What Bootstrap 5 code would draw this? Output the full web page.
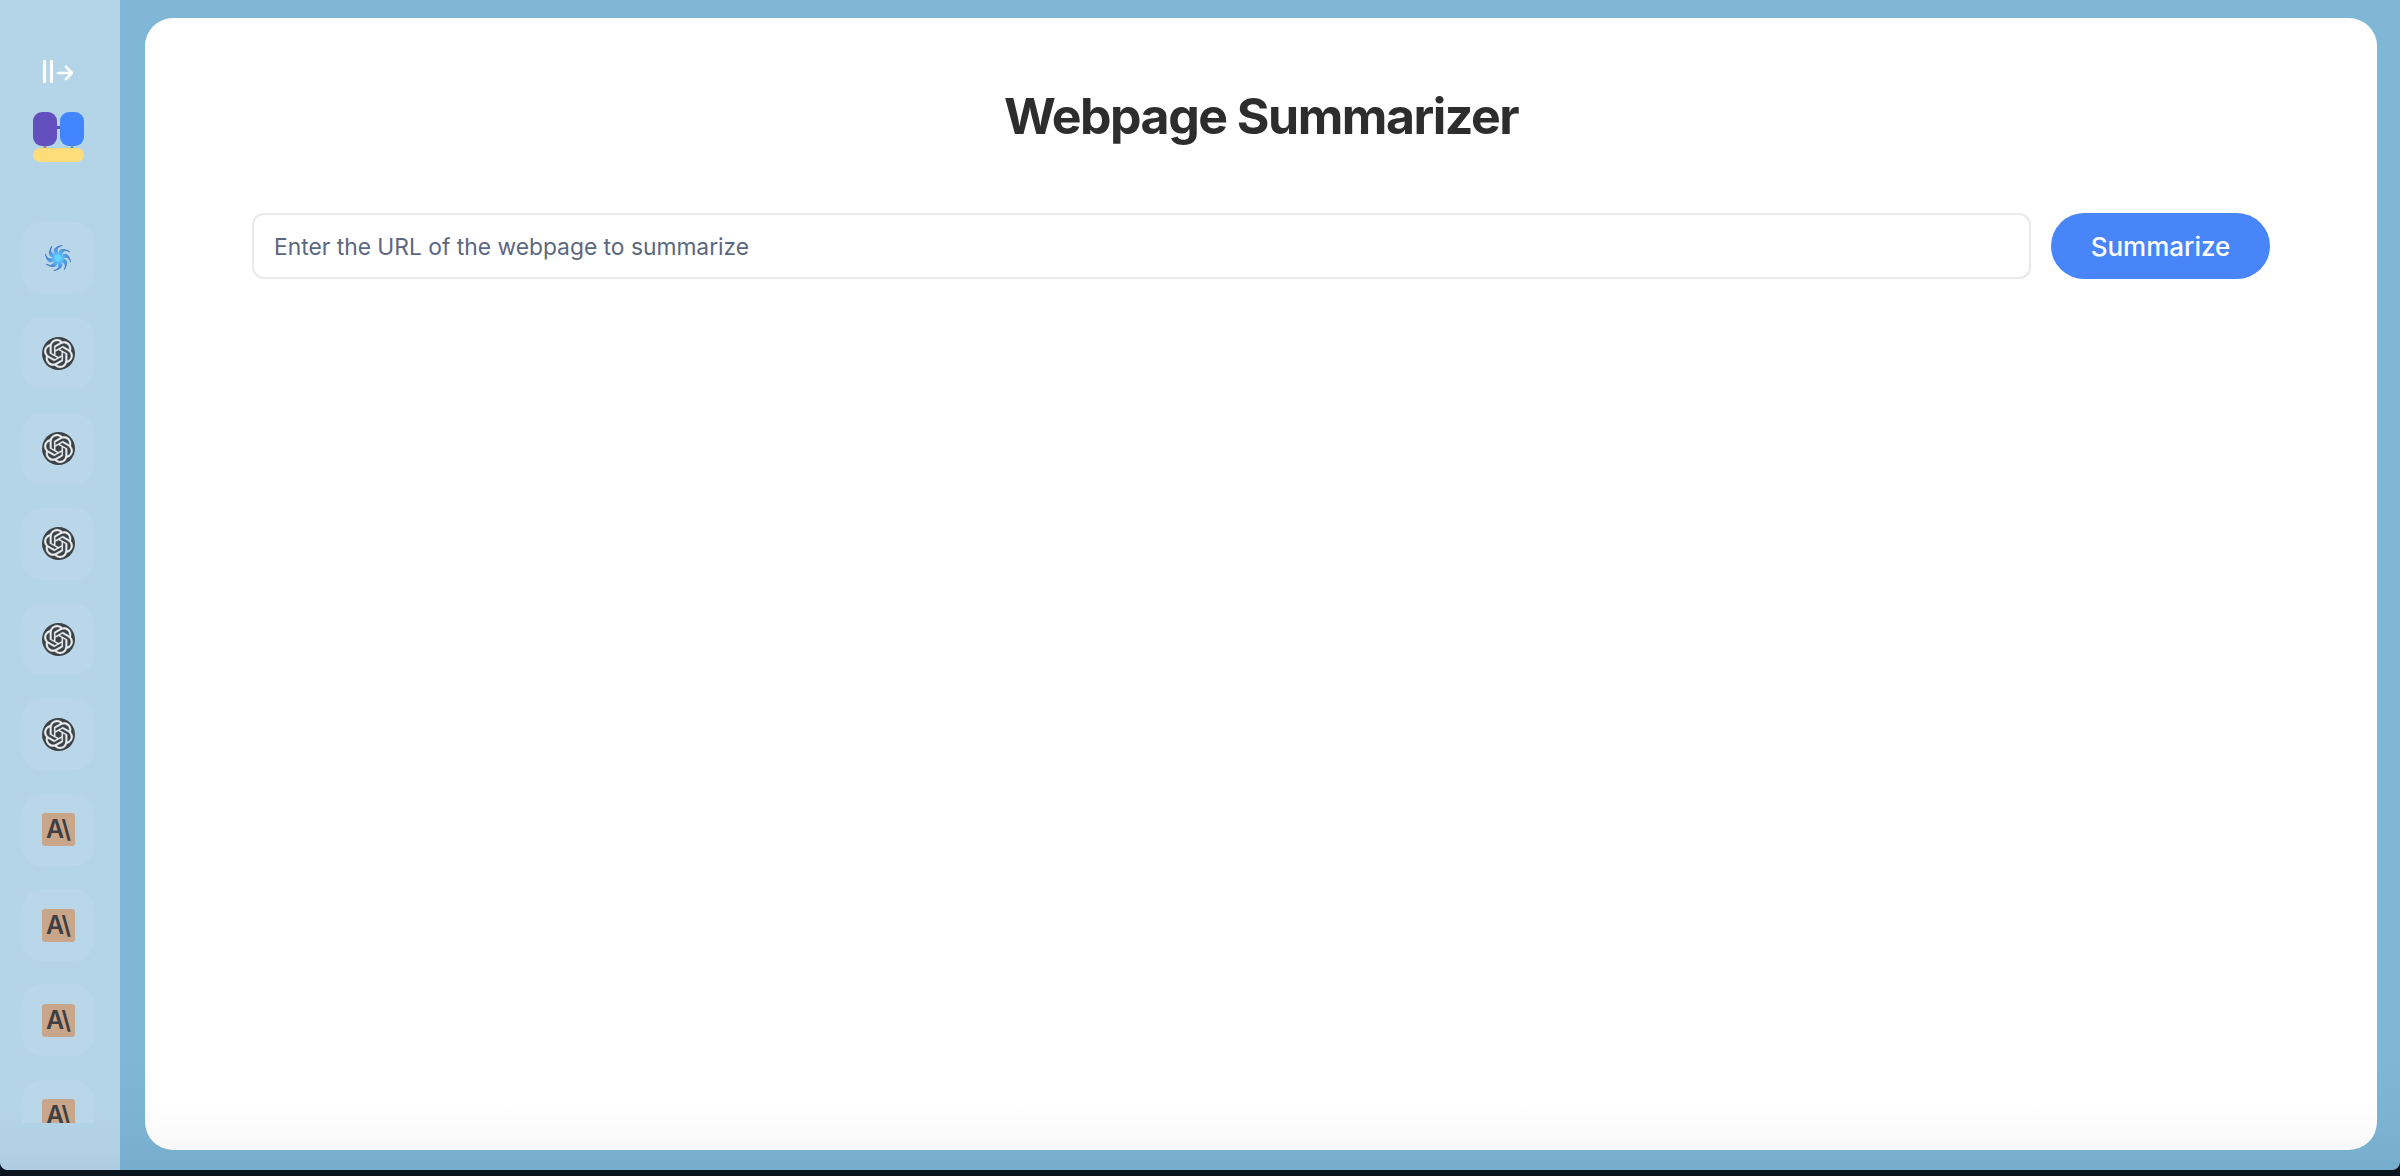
<!DOCTYPE html>
<html lang="en">
<head>
  <meta charset="UTF-8">
  <title>Webpage Summarizer</title>
  <link href="https://cdn.jsdelivr.net/npm/bootstrap@5.3.3/dist/css/bootstrap.min.css" rel="stylesheet">
  <style>
    html, body {
      height: 100%;
    }

    body {
      margin: 0;
      overflow: hidden;
      background: #0b1520;
      font-family: "Inter", "Liberation Sans", sans-serif;
    }

    .app-frame {
      height: 1170px;
      border-radius: 0 0 8px 8px;
      overflow: hidden;
      background: linear-gradient(180deg, #80b7d7 0, #80b7d7 1060px, #78aecd 1170px);
    }

    .side-rail {
      width: 120px;
      height: 100%;
      padding-left: 22px;
      background: linear-gradient(180deg, #b4d4e7 0, #b4d4e7 1110px, #aecde0 1170px);
    }

    .rail-toggle {
      width: 72px;
      height: 23px;
      margin-top: 60px;
      padding: 0;
      border: 0;
      background: none;
    }

    .rail-logo {
      width: 72px;
      margin-top: 29px;
    }

    .rail-list {
      height: 901px;
      margin-top: 60px;
      overflow: hidden;
      gap: 23.3px;
    }

    .rail-tile {
      flex: 0 0 72px;
      width: 72px;
      height: 72px;
      border-radius: 20px;
      background: #b9d7e9;
    }

    .model-icon {
      width: 33px;
      height: 33px;
    }

    .spin-icon {
      width: 28px;
      height: 28px;
    }

    .claude-mark {
      width: 33px;
      height: 33px;
      border-radius: 3px;
      background: #c9a58a;
      color: #3f3f41;
      font-size: 25px;
      font-weight: 600;
      line-height: 33px;
      letter-spacing: -1px;
      text-align: center;
    }

    .page-sheet {
      margin: 18px 23px 20px 25px;
      padding: 0 107px;
      border-radius: 28px;
      background: linear-gradient(180deg, #fff 0, #fff 1085px, #f8f8f8 1132px);
    }

    .page-title {
      margin: 64px 0 0;
      color: #2d2d2d;
      font-size: 50px;
      font-weight: 700;
      line-height: 68px;
      letter-spacing: -1.5px;
      text-align: center;
    }

    .url-row {
      margin-top: 63px;
      gap: 20px;
    }

    .url-input.form-control {
      height: 66px;
      padding: 0 20px;
      border: 2px solid #e9e9ea;
      border-radius: 12px;
      font-size: 22.8px;
    }

    .url-input.form-control::placeholder {
      color: #5b6780;
      opacity: 1;
    }

    .go-btn.btn {
      flex: 0 0 219px;
      height: 66px;
      padding: 0;
      border: 0;
      border-radius: 33px;
      background: #4885f8;
      color: #fff;
      font-size: 26px;
      font-weight: 500;
    }
  </style>
</head>
<body>
  <svg width="0" height="0" class="position-absolute">
    <defs>
      <radialGradient id="spinFill" gradientUnits="userSpaceOnUse" cx="16" cy="16" r="16">
        <stop offset="0" stop-color="#62d6ff"/>
        <stop offset="0.4" stop-color="#58b0f2"/>
        <stop offset="1" stop-color="#3d68bc"/>
      </radialGradient>
      <path id="spinBlade" d="M14.500 12.500C9 10 9.500 3.500 20 1.200c1-.2 1.300.7.500 1C14 4 14.500 8.500 19 12c-1.500-.3-3-.2-4.500.5z"/>
      <symbol id="spinIcon" viewBox="0 0 32 32">
        <circle cx="16" cy="16" r="5" fill="#62d6ff"/>
        <g fill="url(#spinFill)">
          <use href="#spinBlade"/>
          <use href="#spinBlade" transform="rotate(45 16 16)"/>
          <use href="#spinBlade" transform="rotate(90 16 16)"/>
          <use href="#spinBlade" transform="rotate(135 16 16)"/>
          <use href="#spinBlade" transform="rotate(180 16 16)"/>
          <use href="#spinBlade" transform="rotate(225 16 16)"/>
          <use href="#spinBlade" transform="rotate(270 16 16)"/>
          <use href="#spinBlade" transform="rotate(315 16 16)"/>
        </g>
      </symbol>
      <symbol id="knotIcon" viewBox="0 0 33 33">
        <circle cx="16.500" cy="16.500" r="16.500" fill="#3c4145"/>
        <path transform="translate(2.100 2.100) scale(1.2)" fill="#e8ecef" stroke="#e8ecef" stroke-width=".2" d="M22.2819 9.8211a5.9847 5.9847 0 0 0-.5157-4.9108 6.0462 6.0462 0 0 0-6.5098-2.9A6.0651 6.0651 0 0 0 4.9807 4.1818a5.9847 5.9847 0 0 0-3.9977 2.9 6.0462 6.0462 0 0 0 .7427 7.0966 5.98 5.98 0 0 0 .511 4.9107 6.051 6.051 0 0 0 6.5146 2.9001A5.9847 5.9847 0 0 0 13.2599 24a6.0557 6.0557 0 0 0 5.7718-4.2058 5.9894 5.9894 0 0 0 3.9977-2.9001 6.0557 6.0557 0 0 0-.7475-7.0729zm-9.022 12.6081a4.4755 4.4755 0 0 1-2.8764-1.0408l.1419-.0804 4.7783-2.7582a.7948.7948 0 0 0 .3927-.6813v-6.7369l2.02 1.1686a.071.071 0 0 1 .038.052v5.5826a4.504 4.504 0 0 1-4.4945 4.4944zm-9.6607-4.1254a4.4708 4.4708 0 0 1-.5346-3.0137l.142.0852 4.783 2.7582a.7712.7712 0 0 0 .7806 0l5.8428-3.3685v2.3324a.0804.0804 0 0 1-.0332.0615L9.74 19.9502a4.4992 4.4992 0 0 1-6.1408-1.6464zM2.3408 7.8956a4.485 4.485 0 0 1 2.3655-1.9728V11.6a.7664.7664 0 0 0 .3879.6765l5.8144 3.3543-2.0201 1.1685a.0757.0757 0 0 1-.071 0l-4.8303-2.7865A4.504 4.504 0 0 1 2.3408 7.872zm16.5963 3.8558L13.1038 8.364 15.1192 7.2a.0757.0757 0 0 1 .071 0l4.8303 2.7913a4.4944 4.4944 0 0 1-.6765 8.1042v-5.6772a.79.79 0 0 0-.407-.667zm2.0107-3.0231l-.142-.0852-4.7735-2.7818a.7759.7759 0 0 0-.7854 0L9.409 9.2297V6.8974a.0662.0662 0 0 1 .0284-.0615l4.8303-2.7866a4.4992 4.4992 0 0 1 6.6802 4.66zM8.3065 12.863l-2.02-1.1638a.0804.0804 0 0 1-.038-.0567V6.0742a4.4992 4.4992 0 0 1 7.3757-3.4537l-.142.0805L8.704 5.459a.7948.7948 0 0 0-.3927.6813zm1.0976-2.3654l2.602-1.4998 2.6069 1.4998v2.9994l-2.5974 1.4997-2.6067-1.4997Z"/>
      </symbol>
    </defs>
  </svg>

  <div class="app-frame d-flex">
    <aside class="side-rail flex-shrink-0 d-flex flex-column">
      <button type="button" class="rail-toggle d-flex justify-content-center" aria-label="Expand sidebar">
        <svg width="32" height="23" viewBox="0 0 32 23" fill="none" stroke="#fff" stroke-linecap="round" stroke-linejoin="round">
          <path d="M2.500 1.500v20M9.500 1.500v20" stroke-width="3.200"/>
          <path d="M16 13h14M24 7l6 6-6 6" stroke-width="2.600"/>
        </svg>
      </button>
      <div class="rail-logo d-flex justify-content-center">
        <svg width="51" height="50" viewBox="0 0 51 50">
          <rect x="20" y="14" width="10" height="3" fill="#5553b8"/>
          <rect x="10.500" y="33" width="3" height="3" fill="#b77a7a"/>
          <rect x="37.500" y="33" width="3" height="3" fill="#7d9ab5"/>
          <rect x="0" y="0" width="24" height="34" rx="9" fill="#6350be"/>
          <rect x="27" y="0" width="24" height="34" rx="9" fill="#4285fc"/>
          <rect x="0" y="36" width="51" height="14" rx="7" fill="#fddc79"/>
        </svg>
      </div>
      <div class="rail-list d-flex flex-column">
        <div class="rail-tile d-flex align-items-center justify-content-center"><svg class="spin-icon"><use href="#spinIcon"/></svg></div>
        <div class="rail-tile d-flex align-items-center justify-content-center"><svg class="model-icon"><use href="#knotIcon"/></svg></div>
        <div class="rail-tile d-flex align-items-center justify-content-center"><svg class="model-icon"><use href="#knotIcon"/></svg></div>
        <div class="rail-tile d-flex align-items-center justify-content-center"><svg class="model-icon"><use href="#knotIcon"/></svg></div>
        <div class="rail-tile d-flex align-items-center justify-content-center"><svg class="model-icon"><use href="#knotIcon"/></svg></div>
        <div class="rail-tile d-flex align-items-center justify-content-center"><svg class="model-icon"><use href="#knotIcon"/></svg></div>
        <div class="rail-tile d-flex align-items-center justify-content-center"><div class="claude-mark">A\</div></div>
        <div class="rail-tile d-flex align-items-center justify-content-center"><div class="claude-mark">A\</div></div>
        <div class="rail-tile d-flex align-items-center justify-content-center"><div class="claude-mark">A\</div></div>
        <div class="rail-tile d-flex align-items-center justify-content-center"><div class="claude-mark">A\</div></div>
      </div>
    </aside>

    <main class="page-sheet flex-grow-1">
      <h1 class="page-title">Webpage Summarizer</h1>
      <form class="url-row d-flex" onsubmit="return false">
        <input type="text" class="url-input form-control" placeholder="Enter the URL of the webpage to summarize">
        <button type="submit" class="go-btn btn">Summarize</button>
      </form>
    </main>
  </div>

  <script src="https://cdn.jsdelivr.net/npm/bootstrap@5.3.3/dist/js/bootstrap.bundle.min.js"></script>
</body>
</html>
